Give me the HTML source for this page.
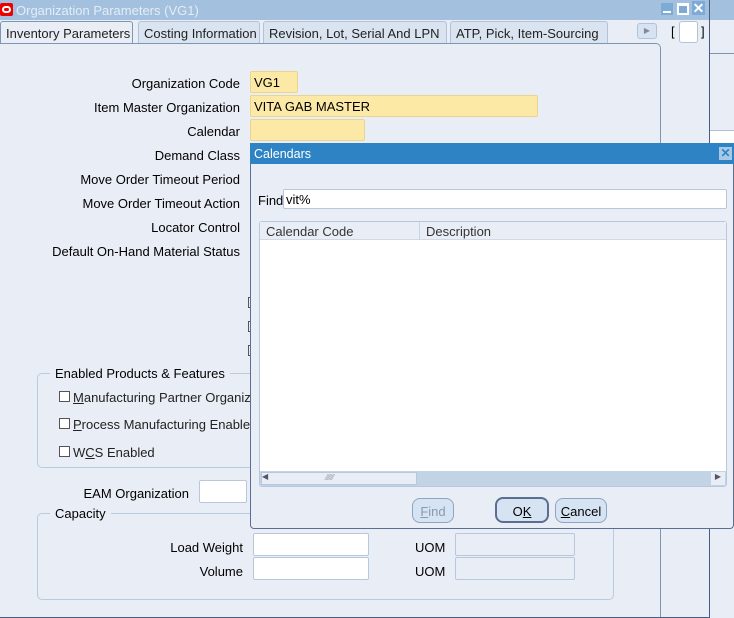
<!DOCTYPE html>
<html><head><style>
*{box-sizing:border-box;margin:0;padding:0}
body{width:734px;height:618px;overflow:hidden;background:#e9eef6;font-family:"Liberation Sans",sans-serif;font-size:13px;color:#000;position:relative}
.a{position:absolute}
.lbl{position:absolute;text-align:right;white-space:nowrap}
.in{position:absolute;background:#fff;border:1px solid #b8c8dc;border-radius:2px;height:22px}
.y{background:#fde9a6;border-color:#e8d592;padding:3px 3px;}
.cb{position:absolute;width:11px;height:11px;border:1px solid #555;background:#fff}
.tab{position:absolute;top:21px;height:23px;border:1px solid #b2c3d8;border-bottom:none;border-radius:3px 3px 0 0;background:#dae4f0;padding:4px 5px;white-space:nowrap;font-size:13px;color:#222}
.btn{position:absolute;height:25px;border:1px solid #8ea5c2;border-radius:8px;background:#d5e3f3;text-align:center;padding-top:5px}
</style></head><body>
<div class="a" style="left:0;top:0;width:734px;height:20px;background:#a3c1de"></div>
<div class="a" style="left:0;top:3px;width:13px;height:13px;background:#e00;border-radius:2px"></div>
<div class="a" style="left:2px;top:6px;width:9px;height:7px;border:2px solid #fff;border-radius:4px"></div>
<div class="a" style="left:16px;top:3px;color:#e4ecf6;font-size:13px">Organization Parameters (VG1)</div>
<div class="a" style="left:661px;top:3px;width:12px;height:12px;background:#7eaad6"></div>
<div class="a" style="left:663px;top:11px;width:8px;height:2px;background:#fff"></div>
<div class="a" style="left:677px;top:3px;width:12px;height:12px;background:#7eaad6;border:2px solid #fff;border-top-width:3px"></div>
<div class="a" style="left:692px;top:1px;width:13px;height:14px;color:#fff;font-weight:bold;font-size:14px;background:#7eaad6;text-align:center;line-height:14px">✕</div>
<div class="a" style="left:0;top:20px;width:710px;height:24px;background:#e9eef6"></div>
<div class="tab" style="left:0;width:133px;background:#e9eef6;border-color:#8095b0">Inventory Parameters</div>
<div class="tab" style="left:138px;width:122px">Costing Information</div>
<div class="tab" style="left:263px;width:184px">Revision, Lot, Serial And LPN</div>
<div class="tab" style="left:450px;width:158px">ATP, Pick, Item-Sourcing</div>
<div class="a" style="left:637px;top:23px;width:20px;height:16px;background:#d5e3f3;border:1px solid #b2c3d8;border-radius:3px;font-size:8px;color:#889;text-align:center;line-height:14px">▶</div>
<div class="a" style="left:671px;top:24px">[</div>
<div class="a" style="left:679px;top:21px;width:19px;height:22px;background:#fff;border:1px solid #b2c3d8;border-radius:3px"></div>
<div class="a" style="left:701px;top:24px">]</div>
<div class="a" style="left:0;top:43px;width:661px;height:575px;border-top:1px solid #8095b0;border-right:1px solid #8095b0;border-radius:0 5px 0 0"></div>
<div class="a" style="left:709px;top:0;width:1px;height:618px;background:#4a5d80"></div>
<div class="a" style="left:710px;top:53px;width:24px;height:1px;background:#8095b0"></div>
<div class="a" style="left:710px;top:130px;width:24px;height:14px;background:#fff;border-top:1px solid #b2c3d8"></div>
<div class="a" style="left:0;top:617px;width:710px;height:1px;background:#4a5d80"></div>

<div class="lbl" style="right:494px;top:76px">Organization Code</div>
<div class="in y" style="left:250px;top:71px;width:48px">VG1</div>
<div class="lbl" style="right:494px;top:100px">Item Master Organization</div>
<div class="in y" style="left:250px;top:95px;width:288px">VITA GAB MASTER</div>
<div class="lbl" style="right:494px;top:124px">Calendar</div>
<div class="in y" style="left:250px;top:119px;width:115px"></div>
<div class="lbl" style="right:494px;top:148px">Demand Class</div>
<div class="lbl" style="right:494px;top:172px">Move Order Timeout Period</div>
<div class="lbl" style="right:494px;top:196px">Move Order Timeout Action</div>
<div class="lbl" style="right:494px;top:220px">Locator Control</div>
<div class="lbl" style="right:494px;top:244px">Default On-Hand Material Status</div>
<div class="a" style="left:248px;top:297px;width:3px;height:11px;border:1px solid #555;border-right:none"></div>
<div class="a" style="left:248px;top:321px;width:3px;height:11px;border:1px solid #555;border-right:none"></div>
<div class="a" style="left:248px;top:345px;width:3px;height:11px;border:1px solid #555;border-right:none"></div>

<div class="a" style="left:37px;top:373px;width:220px;height:95px;border:1px solid #b8cbe0;border-radius:5px"></div>
<div class="a" style="left:50px;top:366px;background:#e9eef6;padding:0 5px">Enabled Products &amp; Features</div>
<div class="cb" style="left:59px;top:391px"></div><div class="a" style="left:73px;top:390px;color:#222;white-space:nowrap"><u>M</u>anufacturing Partner Organiz</div>
<div class="cb" style="left:59px;top:418px"></div><div class="a" style="left:73px;top:417px;color:#222;white-space:nowrap"><u>P</u>rocess Manufacturing Enable</div>
<div class="cb" style="left:59px;top:446px"></div><div class="a" style="left:73px;top:445px;color:#222">W<u>C</u>S Enabled</div>

<div class="lbl" style="right:545px;top:486px">EAM Organization</div>
<div class="in" style="left:199px;top:480px;width:48px;height:23px"></div>
<div class="a" style="left:37px;top:513px;width:577px;height:87px;border:1px solid #b8cbe0;border-radius:5px"></div>
<div class="a" style="left:50px;top:506px;background:#e9eef6;padding:0 5px">Capacity</div>
<div class="lbl" style="right:491px;top:540px">Load Weight</div>
<div class="in" style="left:253px;top:533px;width:116px;height:23px"></div>
<div class="lbl" style="right:491px;top:564px">Volume</div>
<div class="in" style="left:253px;top:557px;width:116px;height:23px"></div>
<div class="a" style="left:415px;top:540px">UOM</div>
<div class="in" style="left:455px;top:533px;width:120px;height:23px;background:#e9eef6"></div>
<div class="a" style="left:415px;top:564px">UOM</div>
<div class="in" style="left:455px;top:557px;width:120px;height:23px;background:#e9eef6"></div>

<div class="a" style="left:250px;top:143px;width:484px;height:386px;background:#e9eef6;border:1px solid #5a6f90;border-radius:0 0 4px 4px"></div>
<div class="a" style="left:250px;top:143px;width:484px;height:21px;background:#2d83c4"></div>
<div class="a" style="left:254px;top:147px;color:#fff;font-size:12.5px">Calendars</div>
<div class="a" style="left:719px;top:147px;width:13px;height:13px;background:#a8c8e8;color:#2d83c4;font-weight:bold;font-size:12px;text-align:center;line-height:13px">✕</div>
<div class="a" style="left:258px;top:193px">Find</div>
<div class="in" style="left:283px;top:189px;width:444px;height:20px;padding:2px 2px">vit%</div>
<div class="a" style="left:259px;top:221px;width:468px;height:266px;border:1px solid #b8c8dc;background:#fff;border-radius:3px"></div>
<div class="a" style="left:260px;top:222px;width:466px;height:18px;background:#e9eef6;border-bottom:1px solid #d0dae6"></div>
<div class="a" style="left:419px;top:222px;width:1px;height:18px;background:#c8d4e2"></div>
<div class="a" style="left:266px;top:224px;color:#333">Calendar Code</div>
<div class="a" style="left:426px;top:224px;color:#333">Description</div>
<div class="a" style="left:260px;top:471px;width:466px;height:15px;background:#c3d3e6"></div>
<div class="a" style="left:261px;top:472px;width:156px;height:13px;background:#e9eef6;border:1px solid #b8c8dc"></div>
<div class="a" style="left:262px;top:472px;font-size:8px;color:#556">◀</div>
<div class="a" style="left:326px;top:473px;font-size:8px;color:#99a">⁄⁄⁄⁄⁄⁄</div>
<div class="a" style="left:711px;top:472px;width:14px;height:13px;background:#e9eef6;font-size:8px;color:#556;text-align:center">▶</div>
<div class="btn" style="left:412px;top:498px;width:42px;color:#8a9ab0"><u>F</u>ind</div>
<div class="btn" style="left:495px;top:497px;width:54px;height:26px;border:2px solid #5a6f90">O<span style="text-decoration:underline">K</span></div>
<div class="btn" style="left:555px;top:498px;width:52px;"><u>C</u>ancel</div>
</body></html>
